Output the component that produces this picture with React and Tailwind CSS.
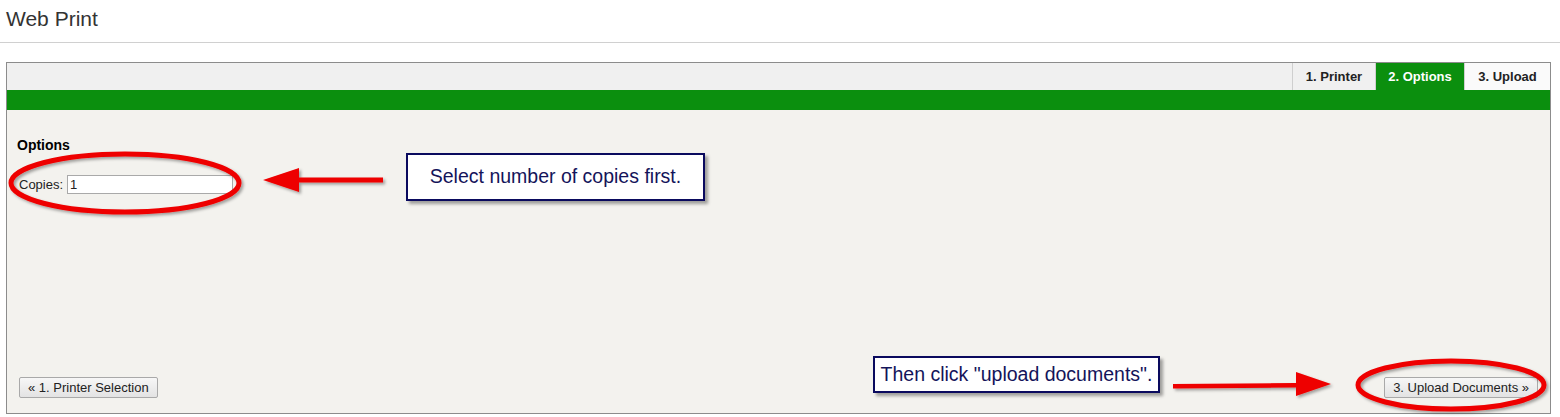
import React from 'react';

const tabs = [
  { label: '1. Printer', active: false, w: 'w-[83px]', bg: 'bg-[#f0f0f0]' },
  { label: '2. Options', active: true, w: 'w-[89px]', bg: 'bg-[#0b8f0e]' },
  { label: '3. Upload', active: false, w: 'w-[86px]', bg: 'bg-[#fafafa]' },
];

const Btn = ({ children }) => (
  <button className="h-[21px] px-[8px] border border-[#a9a9a9] rounded-[2px] bg-gradient-to-b from-[#f7f7f7] to-[#e3e3e3] text-[13px] text-[#222] leading-none">
    {children}
  </button>
);

const Annotations = () => (
  <svg className="absolute inset-0 pointer-events-none" width="1560" height="417" viewBox="0 0 1560 417">
    <defs>
      <filter id="sh" x="-20%" y="-40%" width="140%" height="180%">
        <feDropShadow dx="2" dy="2" stdDeviation="1.5" floodColor="#000" floodOpacity="0.35" />
      </filter>
    </defs>
    <g filter="url(#sh)">
      <ellipse cx="125" cy="183" rx="114" ry="29" fill="none" stroke="#ee0000" strokeWidth="5" />
      <ellipse cx="1451" cy="385" rx="93" ry="24" fill="none" stroke="#ee0000" strokeWidth="5" />
      <path d="M383 177.5 L299 177.5 L299 168 L263 180 L299 192 L299 182.5 L383 182.5 Z" fill="#ee0000" />
      <path d="M1173 384 L1296 383 L1296 372 L1331 384 L1296 396 L1296 387.5 L1173 388.5 Z" fill="#ee0000" />
    </g>
  </svg>
);

const Callout = ({ className, children }) => (
  <div className={`absolute bg-white border-2 border-[#0a0a5e] shadow-[3px_3px_3px_rgba(0,0,0,0.35)] flex items-center justify-center text-[19.5px] text-[#14145a] ${className}`}>
    {children}
  </div>
);

export default function App() {
  return (
    <div className="relative w-[1560px] h-[417px] bg-white overflow-hidden font-['Liberation_Sans',Arial,sans-serif]">
      <div className="h-[43px] border-b border-[#d0d0d0] px-[6px] pt-[6px]">
        <h1 className="text-[21px] leading-[26px] text-[#333]">Web Print</h1>
      </div>

      <div className="ml-[6px] mt-[19px] w-[1545px] border border-[#8c8c8c]">
        <div className="h-[27px] bg-[#f0f0f0] flex justify-end">
          {tabs.map((t) => (
            <div
              key={t.label}
              className={`${t.w} ${t.bg} h-full border-l border-[#cfcfcf] flex items-center justify-center text-[13px] font-bold ${t.active ? 'text-white' : 'text-[#222]'}`}
            >
              {t.label}
            </div>
          ))}
        </div>
        <div className="h-[20px] bg-[#0b8f0e]" />
        <div className="h-[303px] bg-[#f3f2ee] flex flex-col justify-between pt-[27px] pb-[15px] pl-[12px] pr-[12px]">
          <div>
            <div className="text-[14px] font-bold text-black leading-[17px] ml-[-2px]">Options</div>
            <div className="flex items-center mt-[21px] text-[13px] text-[#222]">
              <span>Copies:</span>
              <input
                defaultValue="1"
                className="ml-[4px] w-[166px] h-[19px] border border-[#a9a9a9] bg-white px-[2px] text-[13px] text-[#222] outline-none"
              />
            </div>
          </div>
          <div className="flex justify-between items-end">
            <Btn>« 1. Printer Selection</Btn>
            <Btn>3. Upload Documents »</Btn>
          </div>
        </div>
      </div>

      <Annotations />
      <Callout className="left-[406px] top-[153px] w-[299px] h-[48px]">Select number of copies first.</Callout>
      <Callout className="left-[873px] top-[356px] w-[287px] h-[37px]">Then click "upload documents".</Callout>
    </div>
  );
}
